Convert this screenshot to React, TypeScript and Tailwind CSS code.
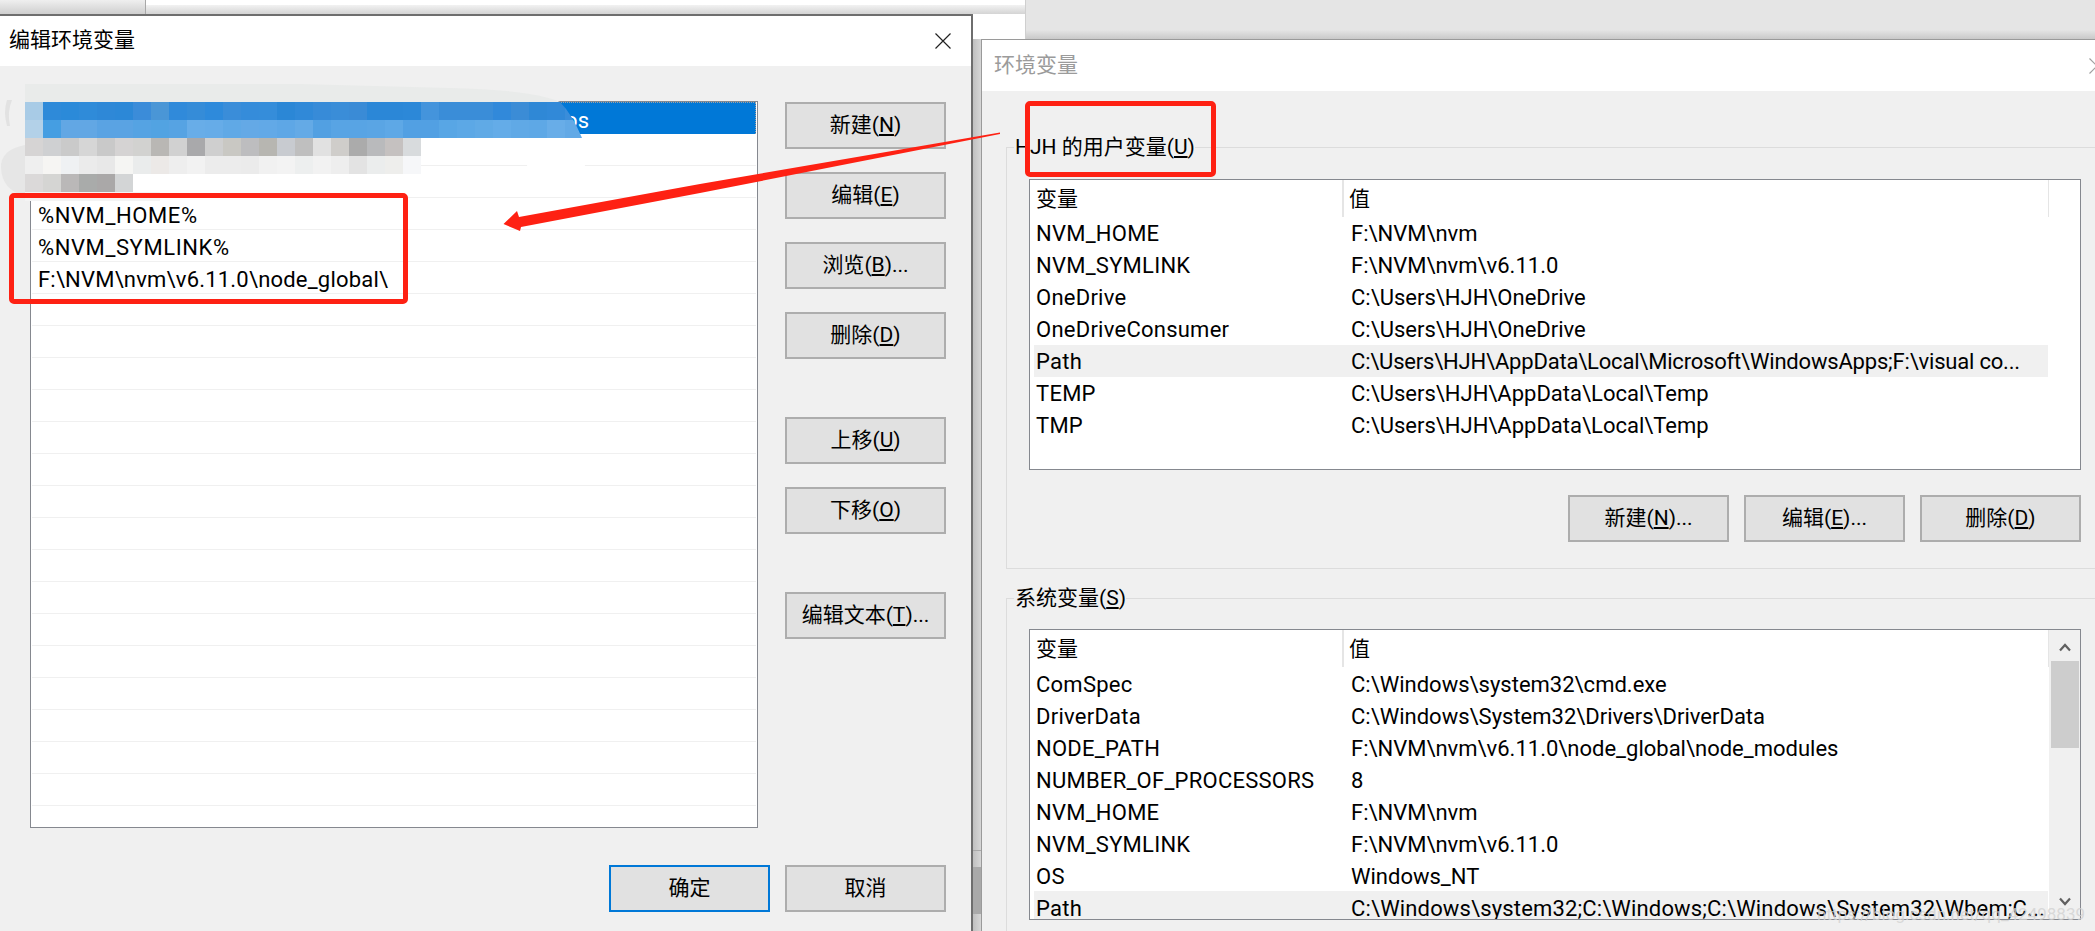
import React from "react";

const BLUE1 = ["#a8cbe6","#2e8ad9","#2b8ad9","#2f8bd9","#2e88d7","#2c88d7","#3b8cd9","#4a96d6","#308ada","#358cd8","#2e8adb","#3a8dd9","#358cda","#358dda","#2b87d6","#3089d8","#378bd8","#3a8dd8","#3a8bd6","#2b87d7","#2b87d7","#2c88d8","#4494dc","#3a8dd8","#3a8dd8","#3a8dd8","#3189da","#3b8cd6","#2f88d6","#3189d8","#3a8dda"];
const BLUE2 = ["#b3d1e8","#459ee2","#62a7e4","#62a7e4","#5aa3e3","#5aa3e3","#55a3e3","#52a3e2","#56a3e3","#68ade8","#66ace8","#60a9e6","#64a9e6","#62a9e7","#5ea7e6","#64aae6","#52a0e2","#58a4e4","#58a4e4","#5aa5e4","#5ea8e6","#52a0e3","#52a0e3","#58a6e5","#5ca8e6","#60aae6","#64ace8","#60a9e6","#5ea8e6","#68ade8","#62a9e6"];
const GRAY1 = ["#d6d4d4","#cfd0d2","#cacaca","#d6d6d6","#c9c9c9","#d5d3d3","#d2d2d0","#b9b7b4","#d1d1d1","#a9a9ab","#cfcfcf","#c9c8c3","#bdbdbf","#b7b6b1","#c8cbd0","#bfbfbf","#e1e1e1","#cfcdca","#ababab","#b9babc","#c5c1c0","#d8dbdd"];
const GRAY2 = ["#efefef","#f6f5f3","#eff1f3","#ebebeb","#e8e8e8","#f5f5f3","#eaecec","#ece9e7","#eeeeee","#f2f2f2","#ececec","#ececec","#ebebeb","#f1f1f1","#f3f3f3","#edefef","#f2f2f2","#eeeeee","#e3e3e3","#ebeded","#eeeeec","#f6f7f9"];
const GRAY3 = ["#dbd9d9","#d5d5d3","#bab8b8","#a9abaa","#aaa8a8","#d3d5d6"];

function Btn({ label, k, tail = "", className = "" }: { label: string; k: string; tail?: string; className?: string }) {
  return (
    <div className={"flex h-[47px] shrink-0 items-center justify-center border-2 border-[#adadad] bg-[#e1e1e1] pt-px text-[21px] text-black " + className}>
      <span>{label}(<u>{k}</u>){tail}</span>
    </div>
  );
}

function CloseIcon({ color }: { color: string }) {
  return (
    <svg width="16" height="16" viewBox="0 0 16 16" className="shrink-0">
      <path d="M0.5 0.5L15.5 15.5M15.5 0.5L0.5 15.5" stroke={color} strokeWidth="1.2" fill="none" />
    </svg>
  );
}

function VarList({ rows, scroll, h, pathTrack, rowPad }: { rows: [string, string][]; scroll?: boolean; h: string; pathTrack: string; rowPad: string }) {
  return (
    <div className={"relative flex w-[1052px] overflow-hidden border border-[#85888f] bg-white " + h}>
      <div className="flex w-[1019px] shrink-0 flex-col pl-1">
        <div className="flex h-[37px] w-[1015px] shrink-0 items-center text-[21px] text-black">
          <span className="h-full w-[310px] shrink-0 border-r-2 border-[#e5e5e5] pl-[2px] leading-[38px]">变量</span>
          <span className="h-full flex-1 border-r border-[#e5e5e5] pl-[5px] leading-[38px]">值</span>
        </div>
        {rows.map(([n, v]) => {
          const isPath = n === "Path";
          return (
            <div key={n} className={"flex h-8 w-[1014px] shrink-0 items-center whitespace-nowrap text-[22px] text-black " + rowPad + " " + (isPath ? "bg-[#f0f0f0]" : "")}>
              <span className="w-[317px] shrink-0 pl-[2px] tracking-[0.25px]">{n}</span>
              <span className={isPath ? pathTrack : ""}>{v}</span>
            </div>
          );
        })}
      </div>
      {scroll && (
        <div className="flex w-[31px] shrink-0 flex-col items-center bg-[#f0f0f0]">
          <div className="flex h-[31px] w-full items-center justify-center pt-[3px]">
            <svg width="12" height="9" viewBox="0 0 12 9"><path d="M1 7.5L6 2L11 7.5" stroke="#606060" strokeWidth="2.2" fill="none" /></svg>
          </div>
          <div className="h-[87px] w-[28px] bg-[#cdcdcd]" />
          <div className="flex-1" />
          <div className="flex h-[35px] w-full items-center justify-center">
            <svg width="12" height="9" viewBox="0 0 12 9"><path d="M1 1.5L6 7L11 1.5" stroke="#606060" strokeWidth="2.2" fill="none" /></svg>
          </div>
        </div>
      )}
    </div>
  );
}

const USER: [string, string][] = [
  ["NVM_HOME", "F:\\NVM\\nvm"],
  ["NVM_SYMLINK", "F:\\NVM\\nvm\\v6.11.0"],
  ["OneDrive", "C:\\Users\\HJH\\OneDrive"],
  ["OneDriveConsumer", "C:\\Users\\HJH\\OneDrive"],
  ["Path", "C:\\Users\\HJH\\AppData\\Local\\Microsoft\\WindowsApps;F:\\visual co..."],
  ["TEMP", "C:\\Users\\HJH\\AppData\\Local\\Temp"],
  ["TMP", "C:\\Users\\HJH\\AppData\\Local\\Temp"],
];
const SYS: [string, string][] = [
  ["ComSpec", "C:\\Windows\\system32\\cmd.exe"],
  ["DriverData", "C:\\Windows\\System32\\Drivers\\DriverData"],
  ["NODE_PATH", "F:\\NVM\\nvm\\v6.11.0\\node_global\\node_modules"],
  ["NUMBER_OF_PROCESSORS", "8"],
  ["NVM_HOME", "F:\\NVM\\nvm"],
  ["NVM_SYMLINK", "F:\\NVM\\nvm\\v6.11.0"],
  ["OS", "Windows_NT"],
  ["Path", "C:\\Windows\\system32;C:\\Windows;C:\\Windows\\System32\\Wbem;C..."],
];

const PATHS = ["", "", "%NVM_HOME%", "%NVM_SYMLINK%", "F:\\NVM\\nvm\\v6.11.0\\node_global\\"];

export default function App() {
  return (
    <div className="relative h-[931px] w-[2095px] overflow-hidden bg-[#e5e5e5] font-[Roboto,'Noto_Sans_CJK_SC',sans-serif]">
      {/* windows behind */}
      <div className="absolute left-0 top-0 h-[14px] w-[146px] border-r border-[#a8a8a8] bg-gradient-to-b from-[#efefef] to-[#cfcfcf]" />
      <div className="absolute left-[146px] top-0 h-[931px] w-[880px] border-r border-[#cfcfcf] bg-white">
        <div className="mt-[5px] h-[9px] bg-gradient-to-b from-[#f2f2f2] to-[#d4d4d4]" />
      </div>
      <div className="absolute left-[1026px] top-[30px] h-[9px] w-[1069px] bg-gradient-to-b from-[#e5e5e5] to-[#c9c9c9]" />
      <div className="absolute left-[972px] top-[39px] flex h-[892px] w-[9px] flex-col bg-gradient-to-r from-[#bdbdbd] to-[#d6d6d6]">
        <div className="mt-[811px] h-[17px] border-t border-[#a9a9a9]" />
        <div className="h-[47px] bg-[#a9a9a9]" />
      </div>

      {/* left dialog */}
      <div className="absolute left-0 top-[14px] flex h-[917px] w-[973px] flex-col border-r-2 border-t-2 border-[#6e6e6e]">
        <div className="flex h-[50px] shrink-0 items-center justify-between bg-white pl-[9px] pr-5 text-[21px] text-black">
          <span>编辑环境变量</span>
          <CloseIcon color="#222" />
        </div>
        <div className="flex flex-1 flex-col bg-[#f0f0f0] pl-[30px] pt-[35px]">
          <div className="flex">
            <div className="h-[727px] w-[728px] shrink-0 overflow-hidden border border-[#85888f] bg-white pl-px">
              <div className="flex h-8 w-[724px] items-center justify-end border-r border-t border-dotted border-[#a0a0a0] bg-[#0078d7] pr-[166px] pt-[3px] text-[22px] text-white">os</div>
              {PATHS.concat(Array(17).fill("")).map((p, i) => (
                <div key={i} className={"flex h-8 w-[724px] items-center border-b border-[#f0f0f0] pl-[6px] pt-[3px] text-[22px] text-black " + (p.startsWith("%") ? "tracking-[0.6px]" : "tracking-[0.2px]")}>{p}</div>
              ))}
            </div>
            <div className="ml-[27px] flex w-[161px] shrink-0 flex-col">
              <Btn label="新建" k="N" className="mt-px" />
              <Btn label="编辑" k="E" className="mt-[23px]" />
              <Btn label="浏览" k="B" tail="..." className="mt-[23px]" />
              <Btn label="删除" k="D" className="mt-[23px]" />
              <Btn label="上移" k="U" className="mt-[58px]" />
              <Btn label="下移" k="O" className="mt-[23px]" />
              <Btn label="编辑文本" k="T" tail="..." className="mt-[58px]" />
            </div>
          </div>
          <div className="ml-[579px] mt-[37px] flex gap-[15px]">
            <div className="flex h-[47px] w-[161px] items-center justify-center border-2 border-[#0078d7] bg-[#e1e1e1] pt-px text-[21px] text-black">确定</div>
            <div className="flex h-[47px] w-[161px] items-center justify-center border-2 border-[#adadad] bg-[#e1e1e1] pt-px text-[21px] text-black">取消</div>
          </div>
        </div>
      </div>

      {/* right dialog */}
      <div className="absolute left-[981px] top-[39px] flex h-[892px] w-[1130px] flex-col border-l border-t border-[#9a9a9a]">
        <div className="flex h-[51px] shrink-0 items-center justify-between bg-white pl-3 pr-1.5 text-[21px] text-[#9b9b9b]">
          <span>环境变量</span>
          <CloseIcon color="#a0a0a0" />
        </div>
        <div className="flex-1 bg-[#f0f0f0] pl-6 pt-[56px]">
          <div className="relative border-b border-l border-t border-[#dcdcdc] pb-[26px] pl-[22px] pt-[31px]">
            <span className="absolute left-[7px] top-[-15px] bg-[#f0f0f0] pl-px text-[21px] leading-[28px] text-black">HJH 的用户变量(<u>U</u>)</span>
            <VarList rows={USER} h="h-[291px]" pathTrack="tracking-[-0.19px]" rowPad="pt-0" />
            <div className="mt-[25px] flex w-[1052px] justify-end gap-[15px]">
              <Btn label="新建" k="N" tail="..." className="w-[161px]" />
              <Btn label="编辑" k="E" tail="..." className="w-[161px]" />
              <Btn label="删除" k="D" className="w-[161px]" />
            </div>
          </div>
          <div className="relative mt-[29px] h-[400px] border-l border-t border-[#dcdcdc] pl-[22px] pt-[30px]">
            <span className="absolute left-[7px] top-[-15px] bg-[#f0f0f0] pl-px text-[21px] leading-[28px] text-black">系统变量(<u>S</u>)</span>
            <VarList rows={SYS} scroll h="h-[291px]" pathTrack="tracking-[0.15px]" rowPad="pt-[2px]" />
          </div>
        </div>
      </div>

      {/* mosaic that hides private entries */}
      <svg className="absolute left-0 top-0" width="600" height="215" viewBox="0 0 600 215">
        <defs>
          <clipPath id="smear">
            <path d="M25 84L300 84L450 88Q535 90 560 102Q572 114 582 138L25 138Z" />
          </clipPath>
        </defs>
        <path d="M7 100Q3 112 7 126L10 126Q7 112 12 100Z" fill="#e2e2e2" />
        <path d="M25 145Q0 150 1 168Q2 190 25 196Z" fill="#e6e6e6" />
        <rect x="527" y="155" width="58" height="16" rx="6" fill="#ffffff" />
        <g clipPath="url(#smear)">
          <rect x="25" y="84" width="560" height="18" fill="#e9ebea" />
          {BLUE1.map((c, i) => <rect key={i} x={25 + i * 18} y="102" width="18" height="18" fill={c} />)}
          {BLUE2.map((c, i) => <rect key={i} x={25 + i * 18} y="120" width="18" height="18" fill={c} />)}
        </g>
        {GRAY1.map((c, i) => <rect key={i} x={25 + i * 18} y="138" width="18" height="18" fill={c} />)}
        {GRAY2.map((c, i) => <rect key={i} x={25 + i * 18} y="156" width="18" height="18" fill={c} />)}
        {GRAY3.map((c, i) => <rect key={i} x={25 + i * 18} y="174" width="18" height="18" fill={c} />)}
        <rect x="25" y="192" width="135" height="9" fill="#f4f4f4" />
      </svg>

      {/* red annotations */}
      <div className="absolute left-[9px] top-[193px] h-[111px] w-[399px] rounded-[5px] border-[5px] border-[#fe2113]" />
      <div className="absolute left-[1025px] top-[101px] h-[76px] w-[191px] rounded-[5px] border-[5px] border-[#fe2113]" />
      <svg className="absolute left-[500px] top-[125px]" width="505" height="110" viewBox="500 125 505 110">
        <path d="M1000 132.5L1000 134L700 193L521 227L520 231L503.5 224L517 211L519 217L700 184Z" fill="#fe2113" />
      </svg>

      {/* watermark */}
      <span className="absolute right-[10px] top-[902px] whitespace-nowrap text-[17px] text-[#d2d2d2]/80">https://blog.csdn.net/qq_42498839</span>
    </div>
  );
}
